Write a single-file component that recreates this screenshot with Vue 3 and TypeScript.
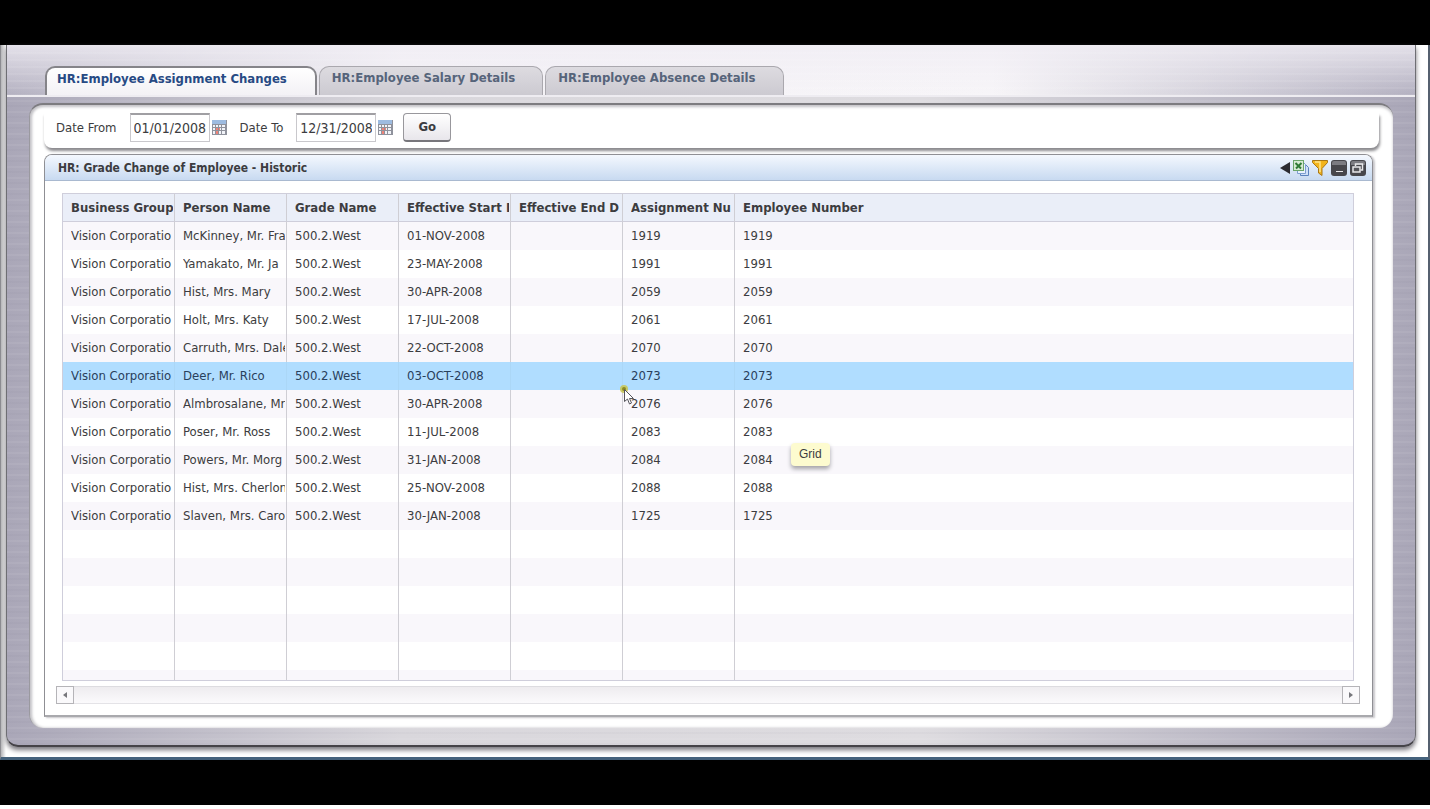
<script setup lang="ts">
import { ref } from 'vue'

interface Assignment {
  person: string
  start: string
  num: string
}

const tabs: string[] = [
  'HR:Employee Assignment Changes',
  'HR:Employee Salary Details',
  'HR:Employee Absence Details',
]
const activeTab = ref(0)
const dateFrom = ref('01/01/2008')
const dateTo = ref('12/31/2008')

const columns: string[] = [
  'Business Group',
  'Person Name',
  'Grade Name',
  'Effective Start D',
  'Effective End D',
  'Assignment Nu',
  'Employee Number',
]

const rows: Assignment[] = [
  { person: 'McKinney, Mr. Fra', start: '01-NOV-2008', num: '1919' },
  { person: 'Yamakato, Mr. Ja', start: '23-MAY-2008', num: '1991' },
  { person: 'Hist, Mrs. Mary', start: '30-APR-2008', num: '2059' },
  { person: 'Holt, Mrs. Katy', start: '17-JUL-2008', num: '2061' },
  { person: 'Carruth, Mrs. Dale', start: '22-OCT-2008', num: '2070' },
  { person: 'Deer, Mr. Rico', start: '03-OCT-2008', num: '2073' },
  { person: 'Almbrosalane, Mr', start: '30-APR-2008', num: '2076' },
  { person: 'Poser, Mr. Ross', start: '11-JUL-2008', num: '2083' },
  { person: 'Powers, Mr. Morg', start: '31-JAN-2008', num: '2084' },
  { person: 'Hist, Mrs. Cherlon', start: '25-NOV-2008', num: '2088' },
  { person: 'Slaven, Mrs. Caro', start: '30-JAN-2008', num: '1725' },
]
const emptyRows = 6
const selected = ref(5)
</script>

<template>
  <div class="screen">
    <div class="stage">
      <div class="metal">
        <nav class="tabs">
          <button
            v-for="(tab, i) in tabs"
            :key="tab"
            type="button"
            class="tab"
            :class="{ active: i === activeTab }"
            @click="activeTab = i"
          >{{ tab }}</button>
        </nav>
        <main class="content">
          <form class="filters" @submit.prevent>
            <label for="from">Date From</label>
            <input id="from" v-model="dateFrom" class="date" type="text">
            <button class="icon-btn cal" type="button" aria-label="Pick start date">
              <svg width="15" height="15" viewBox="0 0 15 15">
                <rect width="15" height="15" fill="#8f929c" />
                <rect width="14" height="4" fill="#9dbbe0" />
                <path d="M1 5h2v2H1zM4 5h2v2H4zM7 5h2v2H7zM10 5h3v2h-3zM1 8h2v2H1zM7 8h2v2H7zM10 8h3v2h-3zM1 11h2v3H1zM10 11h3v3h-3zM7 11h2v3H7z" fill="#f1f3f8" />
                <path d="M4 8h2v2H4zM4 11h2v3H4zM7 8h1v2H7z" fill="#ee8378" />
              </svg>
            </button>
            <label for="to">Date To</label>
            <input id="to" v-model="dateTo" class="date" type="text">
            <button class="icon-btn cal" type="button" aria-label="Pick end date">
              <svg width="15" height="15" viewBox="0 0 15 15">
                <rect width="15" height="15" fill="#8f929c" />
                <rect width="14" height="4" fill="#9dbbe0" />
                <path d="M1 5h2v2H1zM4 5h2v2H4zM7 5h2v2H7zM10 5h3v2h-3zM1 8h2v2H1zM7 8h2v2H7zM10 8h3v2h-3zM1 11h2v3H1zM10 11h3v3h-3zM7 11h2v3H7z" fill="#f1f3f8" />
                <path d="M4 8h2v2H4zM4 11h2v3H4zM7 8h1v2H7z" fill="#ee8378" />
              </svg>
            </button>
            <button class="go" type="submit">Go</button>
          </form>

          <section class="panel">
            <header class="panel-head">
              <h2>HR: Grade Change of Employee - Historic</h2>
              <div class="tools">
                <button class="icon-btn" type="button" aria-label="Collapse">
                  <svg width="10" height="16" viewBox="0 0 10 16"><path d="M10 2v12L0 8z" fill="#2b2b30" /></svg>
                </button>
                <button class="icon-btn" type="button" aria-label="Export to Excel">
                  <svg width="16" height="16" viewBox="0 0 16 16">
                    <path d="M7.500 4.500h5l3 3v8h-8z" fill="#cfe0f8" stroke="#5b82bd" />
                    <path d="M4.500 2.500h6l2 2v9h-8z" fill="#eaf2fd" stroke="#7d9fd0" />
                    <rect x=".5" y=".5" width="10" height="10" fill="#d7ead4" stroke="#6ba56a" />
                    <path d="M2.500 3l5.500 5.500M8.500 3L3 8.500" stroke="#2f7a35" stroke-width="2" />
                  </svg>
                </button>
                <button class="icon-btn" type="button" aria-label="Filter">
                  <svg width="16" height="16" viewBox="0 0 16 16">
                    <path d="M.5.500h15v2L10 8.500v7L6.500 13V8.500L.5 2.500z" fill="#f2b41c" stroke="#a87716" />
                    <path d="M3 2h5v10" fill="none" stroke="#ffe58a" stroke-width="1.500" />
                  </svg>
                </button>
                <button class="icon-btn" type="button" aria-label="Minimize">
                  <svg width="16" height="16" viewBox="0 0 16 16">
                    <rect width="16" height="16" rx="3" fill="#47474c" />
                    <path d="M1 3a2 2 0 0 1 2-2h10a2 2 0 0 1 2 2v2H1z" fill="#7c7c82" />
                    <path d="M5 11.500h7" stroke="#e8e8ea" />
                  </svg>
                </button>
                <button class="icon-btn" type="button" aria-label="Restore">
                  <svg width="16" height="16" viewBox="0 0 16 16">
                    <rect width="16" height="16" rx="3" fill="#47474c" />
                    <path d="M1 3a2 2 0 0 1 2-2h10a2 2 0 0 1 2 2v2H1z" fill="#7c7c82" />
                    <path d="M5.500 6V4h7v6h-2" fill="none" stroke="#e8e8ea" stroke-width="1.500" />
                    <rect x="3" y="7" width="7" height="5" fill="#55555a" stroke="#e8e8ea" stroke-width="1.500" />
                  </svg>
                </button>
              </div>
            </header>

            <div class="grid-area">
              <div class="grid">
                <table>
                  <colgroup>
                    <col v-for="n in 6" :key="n" class="fixed">
                    <col>
                  </colgroup>
                  <thead>
                    <tr><th v-for="c in columns" :key="c" scope="col"><div>{{ c }}</div></th></tr>
                  </thead>
                  <tbody>
                    <tr
                      v-for="(r, i) in rows"
                      :key="r.num"
                      :class="{ selected: i === selected }"
                      @click="selected = i"
                    >
                      <td><div>Vision Corporatio</div></td>
                      <td><div>{{ r.person }}</div></td>
                      <td><div>500.2.West</div></td>
                      <td><div>{{ r.start }}</div></td>
                      <td></td>
                      <td><div>{{ r.num }}</div></td>
                      <td><div>{{ r.num }}</div></td>
                    </tr>
                    <tr v-for="n in emptyRows" :key="'e' + n">
                      <td v-for="c in columns" :key="c"></td>
                    </tr>
                  </tbody>
                </table>
                <svg class="pointer" width="16" height="20" viewBox="0 0 16 20">
                  <circle cx="5" cy="4" r="4" fill="#c9c650" opacity=".85" />
                  <circle cx="5" cy="4" r="2" fill="#8c8a22" />
                  <path d="M5.500 4.500v12l3-2.500 2 5 2-1-2-4.500h4z" fill="#fff" stroke="#55555c" />
                </svg>
                <div class="tooltip" role="tooltip">Grid</div>
              </div>
              <div class="scroll">
                <button class="arrow" type="button" aria-label="Scroll left">
                  <svg width="6" height="8" viewBox="0 0 6 8"><path d="M5 1v6L1 4z" fill="#77777c" /></svg>
                </button>
                <div class="track"></div>
                <button class="arrow" type="button" aria-label="Scroll right">
                  <svg width="6" height="8" viewBox="0 0 6 8"><path d="M1 1v6l4-3z" fill="#77777c" /></svg>
                </button>
              </div>
            </div>
          </section>
        </main>
      </div>
    </div>
  </div>
</template>

<style>
body {
  margin: 0;
  background: #fff;
}
</style>

<style scoped>
* {
  box-sizing: border-box;
}

.screen {
  display: flex;
  flex-direction: column;
  height: calc(100vh - 4px);
  border-top: 45px solid #000;
  border-bottom: 45px solid #000;
  font: 13px/18px 'DejaVu Sans Condensed', 'Noto Sans', sans-serif;
  color: #3c3c40;
}

button,
input {
  font: inherit;
  color: inherit;
}

.stage {
  flex: 1;
  display: flex;
  min-height: 0;
  padding: 0 12px 10px 5px;
  border-left: 1px solid #8d8d92;
  border-right: 2px solid #55606f;
  border-bottom: 3px solid #45627c;
  background: linear-gradient(90deg, #b5b5b8, #fff 5px);
}

.metal {
  flex: 1;
  min-width: 0;
  display: flex;
  flex-direction: column;
  padding-bottom: 17px;
  border: 1px solid #6e6e73;
  border-top: 0;
  border-bottom: 2px solid #454348;
  border-radius: 0 0 12px 12px;
  box-shadow: 0 3px 5px #77757c;
  background:
    repeating-linear-gradient(180deg, rgba(255, 255, 255, .06) 0 2px, transparent 2px 5px, rgba(80, 75, 100, .03) 5px 7px, transparent 7px 11px),
    linear-gradient(90deg, #aaa7b8, #d9d7dc 28%, #dedce0 65%, #aaa7b8);
}

.tabs {
  flex: none;
  display: flex;
  align-items: flex-end;
  gap: 2px;
  height: 52px;
  padding-left: 38px;
  border-bottom: 2px solid #eeecf1;
  background:
    repeating-linear-gradient(180deg, rgba(255, 255, 255, .08) 0 2px, transparent 2px 7px),
    linear-gradient(180deg, rgba(240, 237, 244, .8), rgba(240, 237, 244, 0)),
    linear-gradient(90deg, #b3b0c0, #f4f2f6 28%, #f7f5f8 70%, #b3b0c0);
}

.tab {
  height: 29px;
  padding: 0 27px 6px 12px;
  border: 1px solid #aaa8ae;
  border-bottom: 0;
  border-radius: 10px 10px 0 0;
  background: linear-gradient(#dddbe0, #cccad1);
  color: #56647a;
  font-weight: 700;
  line-height: 20px;
  white-space: nowrap;
}

.tab.active {
  padding: 0 28px 6px 10px;
  border: 2px solid #858489;
  border-bottom: 0;
  background: linear-gradient(#fff, #f3f1f5);
  color: #274a84;
}

.content {
  flex: 1;
  min-height: 0;
  display: flex;
  flex-direction: column;
  margin: 6px 22px 0;
  padding: 8px 20px 11px 14px;
  border-top: 2px solid #7d7c80;
  border-left: 1px solid #9a999f;
  border-radius: 14px;
  background: #fff;
  box-shadow: inset 0 2px 3px #c5c4c8, inset 2px 0 3px #c5c4c8;
}

.filters {
  flex: none;
  display: flex;
  align-items: center;
  height: 35px;
  margin-right: -6px;
  padding: 0 0 6px 12px;
  border-radius: 0 0 8px 8px;
  box-shadow: 1px 3px 3px #8b8a8e;
}

.date {
  width: 80px;
  height: 29px;
  margin-left: 13px;
  padding: 0 3px;
  border: 1px solid #c9c8cc;
  border-top: 2px solid #a09fa3;
  background: #fff;
  font-size: 14px;
}

.icon-btn {
  display: block;
  padding: 0;
  border: 0;
  background: none;
}

.icon-btn svg {
  display: block;
}

.cal {
  margin: 0 0 0 2px;
}

.cal + label {
  margin-left: 13px;
}

.go {
  width: 48px;
  height: 29px;
  margin-left: 10px;
  padding: 0;
  border: 1px solid #98979c;
  border-bottom: 2px solid #77767b;
  border-radius: 4px;
  background: linear-gradient(#fff, #e8e6eb);
  font-weight: 700;
}

.panel {
  flex: 1;
  min-height: 0;
  display: flex;
  flex-direction: column;
  margin-top: 6px;
  border: 1px solid #8f8f94;
  border-bottom: 2px solid #a9a9ad;
  border-radius: 8px 8px 0 0;
  box-shadow: 2px 1px 2px #c8c7cb;
}

.panel-head {
  flex: none;
  display: flex;
  align-items: center;
  justify-content: space-between;
  height: 26px;
  padding: 0 6px 0 13px;
  border-bottom: 1px solid #a9b9d0;
  border-radius: 7px 7px 0 0;
  background: linear-gradient(#f4f8fe, #c8daf1);
}

h2 {
  margin: 0;
  font-size: 12px;
  line-height: 18px;
}

.tools {
  display: flex;
  gap: 3px;
}

.grid-area {
  flex: 1;
  min-height: 0;
  display: flex;
  flex-direction: column;
  padding: 12px 12px 11px 11px;
}

.grid {
  position: relative;
  flex: 1;
  min-height: 0;
  margin: 0 6px;
  overflow: hidden;
  border: 1px solid #cfcedb;
}

table {
  width: 100%;
  table-layout: fixed;
  border-collapse: separate;
  border-spacing: 0;
}

.fixed {
  width: 112px;
}

th,
td {
  height: 28px;
  padding: 0 1px 0 8px;
  border-right: 1px solid #cfced4;
  text-align: left;
}

th:last-child,
td:last-child {
  border-right: 0;
}

th {
  border-bottom: 1px solid #cfcedb;
  background: #eaeef8;
}

th div,
td div {
  overflow: hidden;
  white-space: nowrap;
}

tbody tr:nth-child(odd) {
  background: #f9f7fb;
}

tbody tr.selected {
  background: #b0ddff;
  color: #29405c;
}

.selected td {
  border-color: #abd7f7;
}

.pointer {
  position: absolute;
  left: 556px;
  top: 191px;
}

.tooltip {
  position: absolute;
  left: 728px;
  top: 249px;
  padding: 2px 8px 3px;
  border-radius: 4px;
  background: #fdfbcf;
  box-shadow: 0 3px 4px #a5a4a8;
  font: 12px/18px 'Liberation Sans', sans-serif;
}

.scroll {
  flex: none;
  display: flex;
  height: 18px;
  margin-top: 5px;
}

.track {
  flex: 1;
  border-top: 1px solid #dddce0;
  border-bottom: 1px solid #e4e3e7;
  background: linear-gradient(#eeecef, #fbfafc);
}

.arrow {
  display: flex;
  align-items: center;
  justify-content: center;
  width: 18px;
  padding: 0;
  border: 1px solid #b5b4b8;
  background: #faf9fb;
}
</style>
